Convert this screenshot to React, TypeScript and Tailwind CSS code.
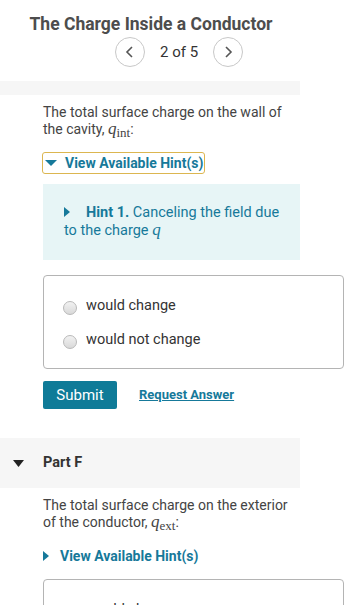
import React from "react";

const teal = "text-[#16799a]";

const MathVar: React.FC<{ sub?: string }> = ({ sub }) => (
  <span className="font-['Liberation_Serif',serif] text-[17px] leading-[10px]">
    <span className="italic">q</span>
    <span className="text-[13px] relative top-[3px]">{sub}</span>
  </span>
);

const Radio: React.FC<{ label: string }> = ({ label }) => (
  <label className="flex items-center gap-[9px] h-[34px]">
    <span className="w-[14px] h-[14px] rounded-full border border-[#b9b9b9] bg-gradient-to-b from-[#f2f2f2] to-[#d9d9d9] mt-[4px]" />
    <span className="text-[14.5px] text-[#333]">{label}</span>
  </label>
);

const App: React.FC = () => {
  return (
    <div className="w-[360px] h-[605px] overflow-hidden bg-white font-['Roboto',sans-serif]">
      {/* header */}
      <div className="w-[302px] pt-[13px] text-center">
        <h1 className="text-[17.5px] leading-[22px] font-bold text-[#4d4d4d]">
          The Charge Inside a Conductor
        </h1>
      </div>
      <div className="flex items-center pl-[115px] mt-[2px] h-[30px]">
        <button className="w-[30px] h-[30px] rounded-full border border-[#c8c8c8] flex items-center justify-center">
          <svg width="12" height="14" viewBox="0 0 12 14" fill="none" stroke="#555" strokeWidth="1.6">
            <path d="M8 2 L3 7 L8 12" />
          </svg>
        </button>
        <span className="mx-[15px] text-[15px] text-[#333]">2 of 5</span>
        <button className="w-[30px] h-[30px] rounded-full border border-[#c8c8c8] flex items-center justify-center">
          <svg width="12" height="14" viewBox="0 0 12 14" fill="none" stroke="#555" strokeWidth="1.6">
            <path d="M4 2 L9 7 L4 12" />
          </svg>
        </button>
      </div>
      <div className="w-[300px] h-[14px] bg-[#f6f6f6] mt-[14px]" />

      {/* Part E body */}
      <div className="pl-[43px] pt-[9px]">
        <p className="text-[14px] leading-[17px] text-[#444] w-[257px]">
          The total surface charge on the wall of the cavity, <MathVar sub="int" />:
        </p>
        <div className="mt-[14px] inline-flex items-center h-[22px] border-[1.5px] border-[#dcb650] rounded-[3px] -ml-[1px] pr-[1px]">
          <svg width="14" height="10" viewBox="0 0 14 10" className="ml-[1px]">
            <path d="M1 2 L13 2 L7 8 Z" fill="#16799a" />
          </svg>
          <span className={`ml-[7px] text-[14px] font-bold ${teal}`}>View Available Hint(s)</span>
        </div>
        <div className="mt-[9px] w-[257px] h-[76px] bg-[#e7f5f6] pl-[21px] pr-[20px] pt-[20px]">
          <p className={`text-[14.5px] leading-[17px] ${teal}`}>
            <svg width="6" height="10" viewBox="0 0 6 10" className="inline mr-[16px] mb-[2px]">
              <path d="M0 0 L6 5 L0 10 Z" fill="#16799a" />
            </svg>
            <span className="font-bold">Hint 1.</span> Canceling the field due to the charge{" "}
            <span className="font-['Liberation_Serif',serif] italic text-[17px]">q</span>
          </p>
        </div>
        <div className="mt-[15px] w-[301px] h-[94px] border border-[#b4b4b4] rounded-[4px] pl-[19px] pt-[13px]">
          <Radio label="would change" />
          <Radio label="would not change" />
        </div>
        <div className="flex items-center mt-[12px]">
          <button className="w-[74px] h-[28px] bg-[#0f7b98] text-white text-[15px] rounded-[2px]">
            Submit
          </button>
          <a className={`ml-[22px] text-[13px] font-bold underline ${teal}`}>Request Answer</a>
        </div>
      </div>

      {/* Part F */}
      <div className="mt-[29px] w-[300px] h-[50px] bg-[#f6f6f6] flex items-center">
        <svg width="11" height="7" viewBox="0 0 11 7" className="ml-[13px]">
          <path d="M0 0 L11 0 L5.5 7 Z" fill="#222" />
        </svg>
        <span className="ml-[19px] text-[14.5px] font-bold text-[#333]">Part F</span>
      </div>
      <div className="pl-[43px] pt-[9px]">
        <p className="text-[14px] leading-[17px] text-[#444] w-[257px]">
          The total surface charge on the exterior of the conductor, <MathVar sub="ext" />:
        </p>
        <div className="mt-[15px] flex items-center h-[20px]">
          <svg width="6" height="10" viewBox="0 0 6 10">
            <path d="M0 0 L6 5 L0 10 Z" fill="#16799a" />
          </svg>
          <span className={`ml-[11px] text-[14px] font-bold ${teal}`}>View Available Hint(s)</span>
        </div>
        <div className="mt-[13px] w-[301px] h-[94px] border border-[#b4b4b4] rounded-[4px] pl-[19px] pt-[13px]">
          <Radio label="would change" />
          <Radio label="would not change" />
        </div>
      </div>
    </div>
  );
};

export default App;
